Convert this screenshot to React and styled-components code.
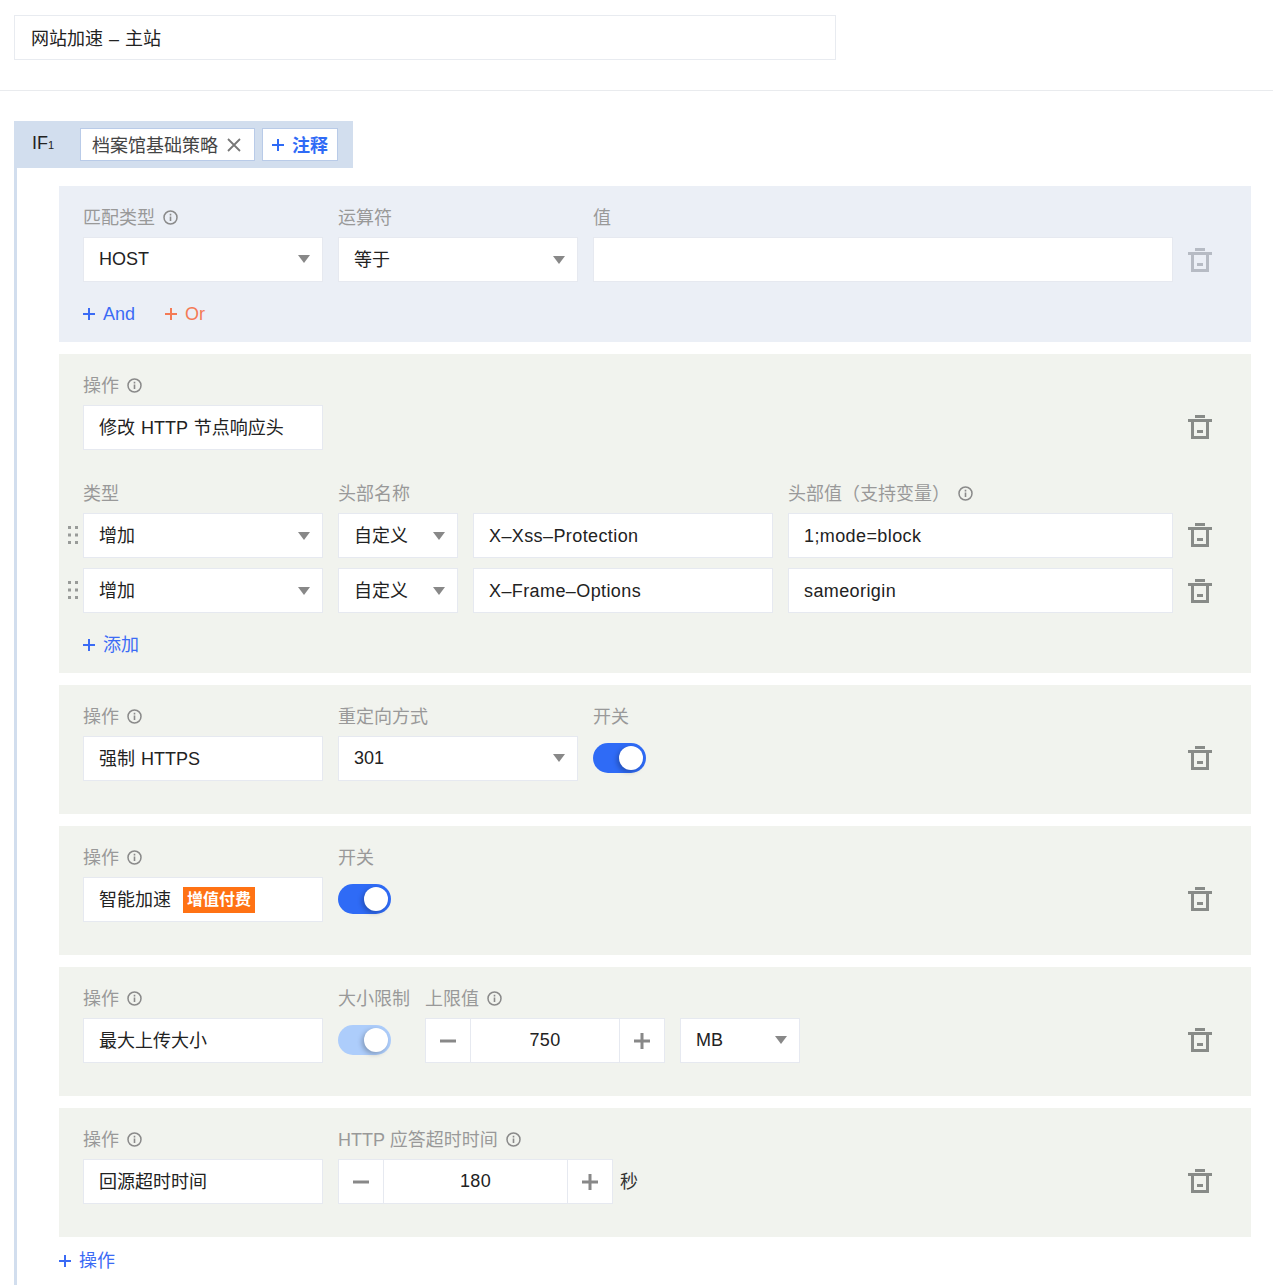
import React from 'react';
import styled, { createGlobalStyle } from 'styled-components';

const GlobalStyle = createGlobalStyle`
  body {
    margin: 0;
    background: #fff;
    color: #222;
    font-family: "Liberation Sans", "Noto Sans CJK SC", sans-serif;
    font-size: 18px;
    line-height: 22px;
  }
`;

const InfoIcon = () => (
  <svg width="15" height="15" viewBox="0 0 15 15" fill="none" stroke="#8a8a8a">
    <circle cx="7.5" cy="7.5" r="6.5" strokeWidth="1.5" />
    <path d="M7.5 6.5v4.5M7.5 3.8v1.6" strokeWidth="1.6" />
  </svg>
);

const TrashIcon = ({ $light }) => (
  <svg width="24" height="24" viewBox="0 0 24 24" fill={$light ? '#b6bbc4' : '#888b88'}>
    <rect x="7" y="0" width="10" height="3" />
    <rect x="0" y="4" width="24" height="3" />
    <path fillRule="evenodd" d="M3 7h18v17H3zM6 7v14h12V7z" />
    <rect x="9" y="15" width="6" height="3" />
  </svg>
);

const DragIcon = () => (
  <svg width="10" height="18" viewBox="0 0 10 18" fill="#999b99">
    {[0, 7.5, 15].map(y => (
      <React.Fragment key={y}>
        <rect x="0" y={y} width="3" height="3" />
        <rect x="7" y={y} width="3" height="3" />
      </React.Fragment>
    ))}
  </svg>
);

const TopBar = styled.div`
  padding: 15px 14px 30px;
  border-bottom: 1px solid #e9ebee;
`;

const NameBox = styled.div`
  box-sizing: border-box;
  width: 822px;
  height: 45px;
  padding: 2px 16px 0;
  display: flex;
  align-items: center;
  border: 1px solid #e8ebf0;
  word-spacing: 1px;
`;

const Group = styled.div`
  margin: 30px 0 0 14px;
  height: 1164px;
  border-left: 3px solid #d2deee;
`;

const GroupHead = styled.div`
  box-sizing: border-box;
  width: 339px;
  height: 47px;
  margin-left: -3px;
  padding: 7px 15px 7px 18px;
  display: flex;
  align-items: flex-start;
  background: #d2deee;
`;

const IfLabel = styled.div`
  flex: none;
  width: 48px;
  line-height: 33px;
  font-size: 18px;
  margin-top: -1px;
  sub {
    font-size: 11px;
    vertical-align: baseline;
  }
`;

const Chip = styled.div`
  box-sizing: border-box;
  height: 33px;
  padding: 2px ${p => (p.$blue ? '9px 0 9px' : '13px 0 11px')};
  margin-right: 7px;
  display: flex;
  align-items: center;
  gap: ${p => (p.$blue ? '8px' : '9px')};
  background: #fff;
  border: 1px solid #b9cbe8;
  color: ${p => (p.$blue ? '#2f6bf6' : '#444')};
  font-weight: ${p => (p.$blue ? 'bold' : 'normal')};
  font-size: 18px;
  white-space: nowrap;
  svg {
    margin-top: -2px;
  }
`;

const Panels = styled.div`
  margin: 18px 22px 0 42px;
  display: flex;
  flex-direction: column;
  gap: 12px;
`;

const Panel = styled.div`
  box-sizing: border-box;
  position: relative;
  padding: 20px 39px ${p => (p.$foot ? '17px' : '33px')} 24px;
  background: ${p => (p.$blue ? '#ebeff6' : '#f1f3ee')};
`;

const Row = styled.div`
  display: flex;
  gap: 15px;
`;

const Field = styled.div`
  display: flex;
  flex-direction: column;
`;

const Label = styled.div`
  height: 22px;
  margin: 1px 0 8px;
  display: flex;
  align-items: center;
  gap: 8px;
  color: #999;
  white-space: nowrap;
  svg {
    margin-top: -2px;
  }
`;

const Box = styled.div`
  box-sizing: border-box;
  width: ${p => p.$w || 240}px;
  height: 45px;
  padding: 0 13px ${p => (p.$up ? '2px' : '0')} 15px;
  display: flex;
  align-items: center;
  justify-content: ${p => (p.$start ? 'flex-start' : 'space-between')};
  background: #fff;
  border: 1px solid #e6e9f0;
  letter-spacing: ${p => (p.$latin ? '0.4px' : '0')};
  word-spacing: 1px;
  white-space: nowrap;
`;

const Arrow = styled.span`
  width: 0;
  height: 0;
  margin-right: -1px;
  border-left: 6px solid transparent;
  border-right: 6px solid transparent;
  border-top: 8px solid #888;
`;

const Tag = styled.span`
  margin-left: 12px;
  padding: 0 4px;
  height: 26px;
  line-height: 26px;
  background: #ff7214;
  color: #fff;
  font-size: 16px;
  font-weight: bold;
`;

const SwitchCell = styled.div`
  box-sizing: border-box;
  height: 45px;
  padding-bottom: 2px;
  display: flex;
  align-items: center;
`;

const SwitchTrack = styled.div`
  position: relative;
  width: 53px;
  height: 30px;
  border-radius: 15px;
  background: ${p => (p.$dim ? '#adcdfb' : '#2f6bf6')};
`;

const SwitchKnob = styled.span`
  position: absolute;
  top: 3px;
  right: 3px;
  width: 24px;
  height: 24px;
  border-radius: 50%;
  background: #fff;
  box-shadow: -2px 2px 5px rgba(0, 0, 0, 0.25);
`;

const Stepper = styled.div`
  box-sizing: border-box;
  width: ${p => p.$w}px;
  height: 45px;
  display: flex;
  background: #fff;
  border: 1px solid #e6e9f0;
`;

const StepBtn = styled.div`
  flex: 0 0 44px;
  display: flex;
  align-items: center;
  justify-content: center;
  border-${p => (p.$end ? 'left' : 'right')}: 1px solid #e6e9f0;
`;

const StepValue = styled.div`
  flex: 1;
  padding-bottom: 2px;
  display: flex;
  align-items: center;
  justify-content: center;
  letter-spacing: 0.4px;
`;

const Unit = styled.div`
  height: 45px;
  margin-left: -8px;
  display: flex;
  align-items: center;
  color: #333;
`;

const TrashCell = styled.div`
  margin: 0 0 ${p => (p.$low ? '0' : '1px')} auto;
  align-self: flex-end;
  height: 44px;
  display: flex;
  align-items: center;
`;

const ParamGrid = styled.div`
  margin-top: 32px;
  display: grid;
  grid-template-columns: 240px 120px 300px 385px 24px;
  column-gap: 15px;
  row-gap: 10px;
`;

const ParamLabel = styled(Label)`
  margin-bottom: -2px;
  grid-column: ${p => p.$span || 'auto'};
`;

const SelectSlot = styled.div`
  position: relative;
`;

const Handle = styled.div`
  position: absolute;
  left: -15px;
  top: 13px;
  line-height: 0;
`;

const LinkRow = styled.div`
  margin-top: 21px;
  display: flex;
  gap: 30px;
`;

const AddLink = styled.div`
  height: 22px;
  display: flex;
  align-items: center;
  gap: 8px;
  color: ${p => (p.$orange ? '#f47a55' : '#3b6bf5')};
`;

const Plus = ({ color = '#3b6bf5' }) => (
  <svg width="12" height="12" viewBox="0 0 12 12" stroke={color} strokeWidth="2">
    <path d="M0 6h12M6 0v12" />
  </svg>
);

const StepGlyph = ({ plus }) => (
  <svg width="16" height="16" viewBox="0 0 16 16" stroke="#888" strokeWidth="3">
    <path d={plus ? 'M0 8h16M8 0v16' : 'M0 8h16'} />
  </svg>
);

const Foot = styled.div`
  margin: 13px 0 0 42px;
`;

const CloseIcon = () => (
  <svg width="14" height="14" viewBox="0 0 14 14" stroke="#777" strokeWidth="1.8">
    <path d="M1 1l12 12M13 1L1 13" />
  </svg>
);

const Delete = ({ light, low }) => (
  <TrashCell $low={low}>
    <TrashIcon $light={light} />
  </TrashCell>
);

const OpLabel = () => (
  <Label>
    操作 <InfoIcon />
  </Label>
);

const Select = ({ w, up, children }) => (
  <Box $w={w} $up={up}>
    {children}
    <Arrow />
  </Box>
);

const Switch = ({ dim }) => (
  <SwitchCell>
    <SwitchTrack $dim={dim}>
      <SwitchKnob />
    </SwitchTrack>
  </SwitchCell>
);

const NumberStep = ({ w, value }) => (
  <Stepper $w={w}>
    <StepBtn>
      <StepGlyph />
    </StepBtn>
    <StepValue>{value}</StepValue>
    <StepBtn $end>
      <StepGlyph plus />
    </StepBtn>
  </Stepper>
);

const headerRows = [
  { name: 'X–Xss–Protection', value: '1;mode=block' },
  { name: 'X–Frame–Options', value: 'sameorigin', low: true },
];

export default function App() {
  return (
    <>
      <GlobalStyle />
      <TopBar>
        <NameBox>网站加速 – 主站</NameBox>
      </TopBar>
      <Group>
        <GroupHead>
          <IfLabel>
            IF<sub>1</sub>
          </IfLabel>
          <Chip>
            档案馆基础策略
            <CloseIcon />
          </Chip>
          <Chip $blue>
            <Plus color="#2f6bf6" />
            注释
          </Chip>
        </GroupHead>
        <Panels>
          <Panel $blue $foot>
            <Row>
              <Field>
                <Label>
                  匹配类型 <InfoIcon />
                </Label>
                <Select up>HOST</Select>
              </Field>
              <Field>
                <Label>运算符</Label>
                <Select>等于</Select>
              </Field>
              <Field>
                <Label>值</Label>
                <Box $w={580} />
              </Field>
              <Delete light low />
            </Row>
            <LinkRow>
              <AddLink>
                <Plus /> And
              </AddLink>
              <AddLink $orange>
                <Plus color="#f47a55" /> Or
              </AddLink>
            </LinkRow>
          </Panel>

          <Panel $foot>
            <Row>
              <Field>
                <OpLabel />
                <Box>修改 HTTP 节点响应头</Box>
              </Field>
              <Delete />
            </Row>
            <ParamGrid>
              <ParamLabel>类型</ParamLabel>
              <ParamLabel $span="span 2">头部名称</ParamLabel>
              <ParamLabel $span="span 2">
                头部值（支持变量） <InfoIcon />
              </ParamLabel>
              {headerRows.map(row => (
                <React.Fragment key={row.name}>
                  <SelectSlot>
                    <Handle>
                      <DragIcon />
                    </Handle>
                    <Select>增加</Select>
                  </SelectSlot>
                  <Select w={120}>自定义</Select>
                  <Box $w={300} $latin>{row.name}</Box>
                  <Box $w={385} $latin>{row.value}</Box>
                  <Delete low={row.low} />
                </React.Fragment>
              ))}
            </ParamGrid>
            <LinkRow>
              <AddLink>
                <Plus /> 添加
              </AddLink>
            </LinkRow>
          </Panel>

          <Panel>
            <Row>
              <Field>
                <OpLabel />
                <Box>强制 HTTPS</Box>
              </Field>
              <Field>
                <Label>重定向方式</Label>
                <Select up>301</Select>
              </Field>
              <Field>
                <Label>开关</Label>
                <Switch />
              </Field>
              <Delete />
            </Row>
          </Panel>

          <Panel>
            <Row>
              <Field>
                <OpLabel />
                <Box $start>
                  智能加速<Tag>增值付费</Tag>
                </Box>
              </Field>
              <Field>
                <Label>开关</Label>
                <Switch />
              </Field>
              <Delete />
            </Row>
          </Panel>

          <Panel>
            <Row>
              <Field>
                <OpLabel />
                <Box>最大上传大小</Box>
              </Field>
              <Field>
                <Label>大小限制</Label>
                <Switch dim />
              </Field>
              <Field>
                <Label>
                  上限值 <InfoIcon />
                </Label>
                <NumberStep w={240} value="750" />
              </Field>
              <Field>
                <Label>&nbsp;</Label>
                <Select w={120} up>MB</Select>
              </Field>
              <Delete />
            </Row>
          </Panel>

          <Panel>
            <Row>
              <Field>
                <OpLabel />
                <Box>回源超时时间</Box>
              </Field>
              <Field>
                <Label>
                  HTTP 应答超时时间 <InfoIcon />
                </Label>
                <NumberStep w={275} value="180" />
              </Field>
              <Field>
                <Label>&nbsp;</Label>
                <Unit>秒</Unit>
              </Field>
              <Delete />
            </Row>
          </Panel>
        </Panels>
        <Foot>
          <AddLink>
            <Plus /> 操作
          </AddLink>
        </Foot>
      </Group>
    </>
  );
}
